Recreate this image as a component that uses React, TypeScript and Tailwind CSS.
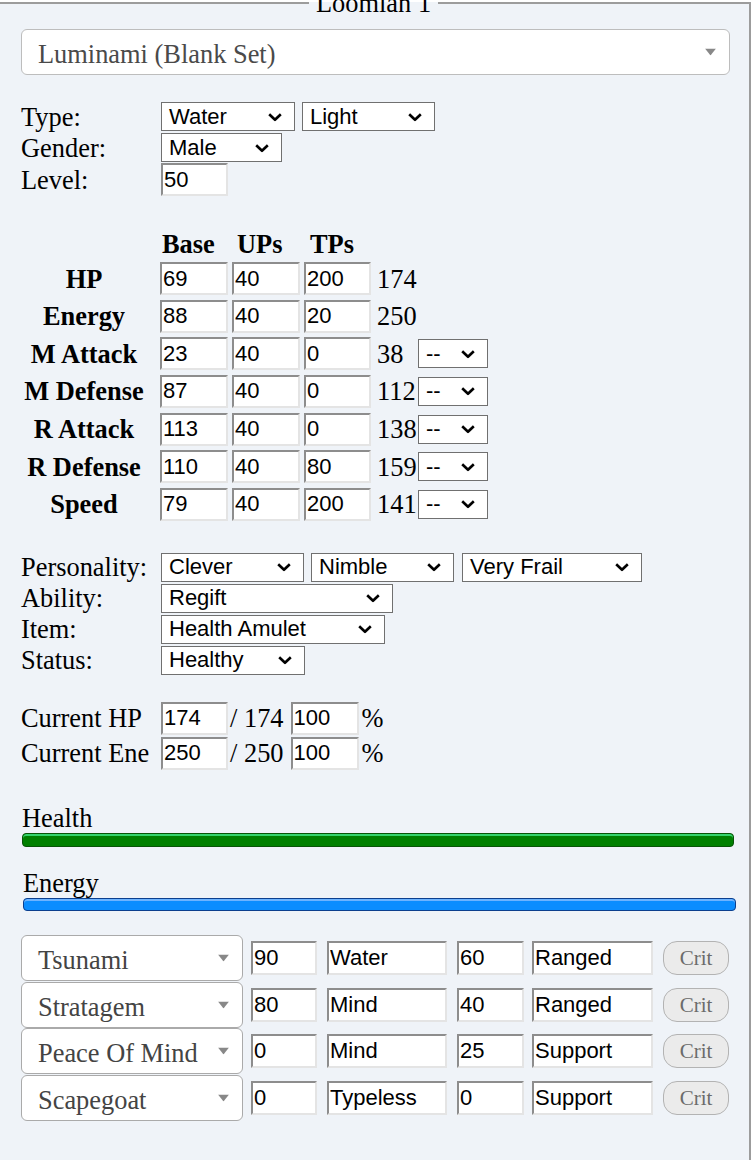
import clsx from "clsx";

const sans = "[font-family:'Liberation_Sans',Arial,sans-serif]";
const inset =
  "border-2 border-t-[#8d8d8d] border-l-[#8d8d8d] border-r-[#e4e4e4] border-b-[#e4e4e4] bg-white";

const stats = [
  { name: "HP", base: "69", ups: "40", tps: "200", total: "174", nature: false },
  { name: "Energy", base: "88", ups: "40", tps: "20", total: "250", nature: false },
  { name: "M Attack", base: "23", ups: "40", tps: "0", total: "38", nature: true },
  { name: "M Defense", base: "87", ups: "40", tps: "0", total: "112", nature: true },
  { name: "R Attack", base: "113", ups: "40", tps: "0", total: "138", nature: true },
  { name: "R Defense", base: "110", ups: "40", tps: "80", total: "159", nature: true },
  { name: "Speed", base: "79", ups: "40", tps: "200", total: "141", nature: true },
];

const moves = [
  { name: "Tsunami", power: "90", type: "Water", acc: "60", cat: "Ranged" },
  { name: "Stratagem", power: "80", type: "Mind", acc: "40", cat: "Ranged" },
  { name: "Peace Of Mind", power: "0", type: "Mind", acc: "25", cat: "Support" },
  { name: "Scapegoat", power: "0", type: "Typeless", acc: "0", cat: "Support" },
];

function Chevron() {
  return (
    <svg
      width="16"
      height="10"
      viewBox="0 0 16 10"
      className="pointer-events-none absolute right-[11px] top-1/2 -translate-y-1/2"
      aria-hidden="true"
    >
      <path d="M2.2 2.2 L8 7.8 L13.8 2.2" fill="none" stroke="#000" strokeWidth="2.6" strokeLinejoin="round" />
    </svg>
  );
}

function Triangle({ className }: { className?: string }) {
  return (
    <svg width="11" height="7" viewBox="0 0 11 7" className={clsx("pointer-events-none absolute top-1/2 -translate-y-1/2", className)} aria-hidden="true">
      <polygon points="0,0 11,0 5.5,7" fill="#888" />
    </svg>
  );
}

// select nativo dibujado a mano para que la flecha quede igual en el headless
function Dropdown({ value, className }: { value: string; className: string }) {
  return (
    <div
      className={clsx(
        "relative flex h-[29px] shrink-0 items-center border border-[#707070] bg-white pl-[7px] text-[22px] leading-[26px]",
        sans,
        className
      )}
    >
      <span>{value}</span>
      <Chevron />
    </div>
  );
}

function Field({ value, className }: { value: string; className: string }) {
  return (
    <input
      readOnly
      value={value}
      className={clsx(inset, sans, "shrink-0 pl-[1px] text-[22px] text-black outline-none", className)}
    />
  );
}

function Label({ children }: { children: string }) {
  return <span className="w-[140px] shrink-0">{children}</span>;
}

export default function App() {
  return (
    <div className="min-h-[1160px] w-[755px] overflow-hidden bg-white [font-family:'Liberation_Serif',serif] text-[26.4px] leading-[30px] text-black">
      <fieldset className="-mt-[12px] -ml-[6px] h-[1200px] w-[757px] border-2 border-[#9c9c9c] bg-[#eff3f8] pl-[25px]">
        <legend className="ml-[288px] px-[7px]">Loomian 1</legend>

        <div className="relative mt-[11px] flex h-[46px] w-[709px] items-center rounded-[6px] border border-[#bdbdbd] bg-white pl-[16px] pt-[3px] text-[#4a4a4a]">
          Luminami (Blank Set)
          <Triangle className="right-[13px]" />
        </div>

        <div className="mt-[26px] flex flex-col">
          <div className="flex h-[31px] items-center">
            <Label>Type:</Label>
            <Dropdown value="Water" className="w-[134px]" />
            <Dropdown value="Light" className="ml-[7px] w-[133px]" />
          </div>
          <div className="flex h-[31px] items-center">
            <Label>Gender:</Label>
            <Dropdown value="Male" className="w-[121px]" />
          </div>
          <div className="flex h-[33px] items-center">
            <Label>Level:</Label>
            <Field value="50" className="h-[33px] w-[67px]" />
          </div>
        </div>

        <div className="mt-[33px] flex h-[30px] font-bold">
          <span className="w-[126px] shrink-0" />
          <span className="ml-[13px] w-[68px] pl-[2px]">Base</span>
          <span className="ml-[4px] w-[68px] pl-[5px]">UPs</span>
          <span className="ml-[4px] w-[67px] pl-[6px]">TPs</span>
        </div>

        <div className="mt-[3px] flex flex-col gap-[4.67px]">
          {stats.map((s) => (
            <div key={s.name} className="flex h-[33px] items-center">
              <span className="w-[126px] shrink-0 text-center font-bold">{s.name}</span>
              <Field value={s.base} className="ml-[13px] h-[33px] w-[68px]" />
              <Field value={s.ups} className="ml-[4px] h-[33px] w-[68px]" />
              <Field value={s.tps} className="ml-[4px] h-[33px] w-[67px]" />
              <span className="ml-[6px] w-[41px] shrink-0">{s.total}</span>
              {s.nature && <Dropdown value="--" className="h-[28px] w-[70px]" />}
            </div>
          ))}
        </div>

        <div className="mt-[32px] flex flex-col gap-[2px]">
          <div className="flex h-[29px] items-center">
            <Label>Personality:</Label>
            <Dropdown value="Clever" className="w-[143px]" />
            <Dropdown value="Nimble" className="ml-[7px] w-[143px]" />
            <Dropdown value="Very Frail" className="ml-[8px] w-[180px]" />
          </div>
          <div className="flex h-[29px] items-center">
            <Label>Ability:</Label>
            <Dropdown value="Regift" className="w-[232px]" />
          </div>
          <div className="flex h-[29px] items-center">
            <Label>Item:</Label>
            <Dropdown value="Health Amulet" className="w-[224px]" />
          </div>
          <div className="flex h-[29px] items-center">
            <Label>Status:</Label>
            <Dropdown value="Healthy" className="w-[144px]" />
          </div>
        </div>

        <div className="mt-[27px] flex flex-col gap-[2px]">
          {[
            { label: "Current HP", cur: "174", max: "174" },
            { label: "Current Ene", cur: "250", max: "250" },
          ].map((r) => (
            <div key={r.label} className="flex h-[33px] items-center">
              <Label>{r.label}</Label>
              <Field value={r.cur} className="h-[33px] w-[67px]" />
              <span className="ml-[2px] shrink-0">/ {r.max}</span>
              <Field value="100" className="ml-[7px] h-[33px] w-[68px]" />
              <span className="ml-[3px]">%</span>
            </div>
          ))}
        </div>

        <div className="mt-[33px] pl-[1px]">Health</div>
        <div className="ml-[1px] h-[14px] w-[712px] rounded-[4px] border border-[#075407] bg-[#008000] shadow-[inset_0_2px_0_#34d36b]" />

        <div className="mt-[21px] pl-[2px]">Energy</div>
        <div className="ml-[2px] h-[13px] w-[713px] rounded-[4px] border border-[#0c3f8e] bg-[#0a8dff] shadow-[inset_0_2px_0_#6cb3ff]" />

        <div className="mt-[24px] flex flex-col gap-[0.67px]">
          {moves.map((m) => (
            <div key={m.name} className="flex h-[46px] items-center">
              <div className="relative flex h-[46px] w-[222px] shrink-0 items-center rounded-[6px] border border-[#aaaaaa] bg-white pl-[16px] pt-[4px] text-[#444]">
                {m.name}
                <Triangle className="right-[13px]" />
              </div>
              <Field value={m.power} className="ml-[8px] h-[34px] w-[66px]" />
              <Field value={m.type} className="ml-[10px] h-[34px] w-[120px]" />
              <Field value={m.acc} className="ml-[10px] h-[34px] w-[67px]" />
              <Field value={m.cat} className="ml-[8px] h-[34px] w-[121px]" />
              <button
                type="button"
                className="ml-[10px] h-[34px] w-[66px] shrink-0 rounded-[14px] border border-[#b3b3b3] bg-[#ebebeb] text-[21px] leading-[24px] text-[#6b6b6b]"
              >
                Crit
              </button>
            </div>
          ))}
        </div>
      </fieldset>
    </div>
  );
}
